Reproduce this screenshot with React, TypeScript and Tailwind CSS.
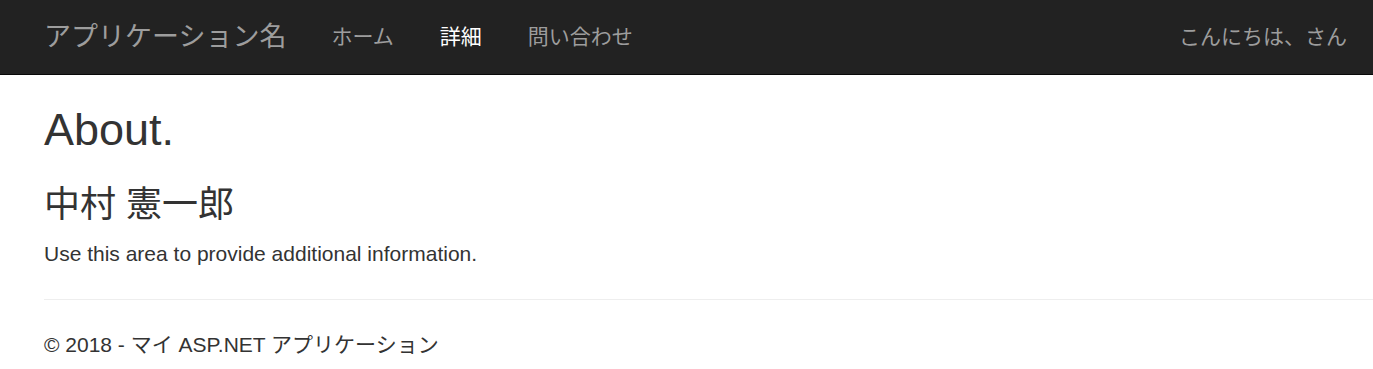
const font = "[font-family:'Liberation_Sans','Noto_Sans_CJK_JP',sans-serif]";

const navLinks = [
  { label: "ホーム", active: false },
  { label: "詳細", active: true },
  { label: "問い合わせ", active: false },
];

export default function App() {
  return (
    <div className={`${font} min-h-[369px] bg-white text-[21px] leading-[30px] text-[#333]`}>
      <nav className="flex h-[75px] items-stretch border-b border-[#080808] bg-[#222] pl-[22px] pr-[3px]">
        <a className="flex items-center px-[22px] text-[27px] leading-[30px] text-[#9d9d9d]" href="#">
          アプリケーション名
        </a>
        <ul className="flex">
          {navLinks.map((l) => (
            <li key={l.label} className="flex">
              <a
                href="#"
                className={`flex items-center px-[23px] ${l.active ? "text-white" : "text-[#9d9d9d]"}`}
              >
                {l.label}
              </a>
            </li>
          ))}
        </ul>
        <div className="ml-auto flex items-center px-[23px] text-[#9d9d9d]">
          こんにちは、さん
        </div>
      </nav>

      <div className="pl-[44px]">
        <h2 className="mt-[30px] mb-[15px] text-[45px] leading-[1.1] font-normal">About.</h2>
        <h3 className="mt-[30px] mb-[15px] text-[36px] leading-[1.1] font-normal">中村 憲一郎</h3>
        <p className="mb-[15px]">Use this area to provide additional information.</p>
        <hr className="mt-[30px] mb-[30px] border-0 border-t border-[#eee]" />
        <footer>
          <p>© 2018 - マイ ASP.NET アプリケーション</p>
        </footer>
      </div>
    </div>
  );
}
